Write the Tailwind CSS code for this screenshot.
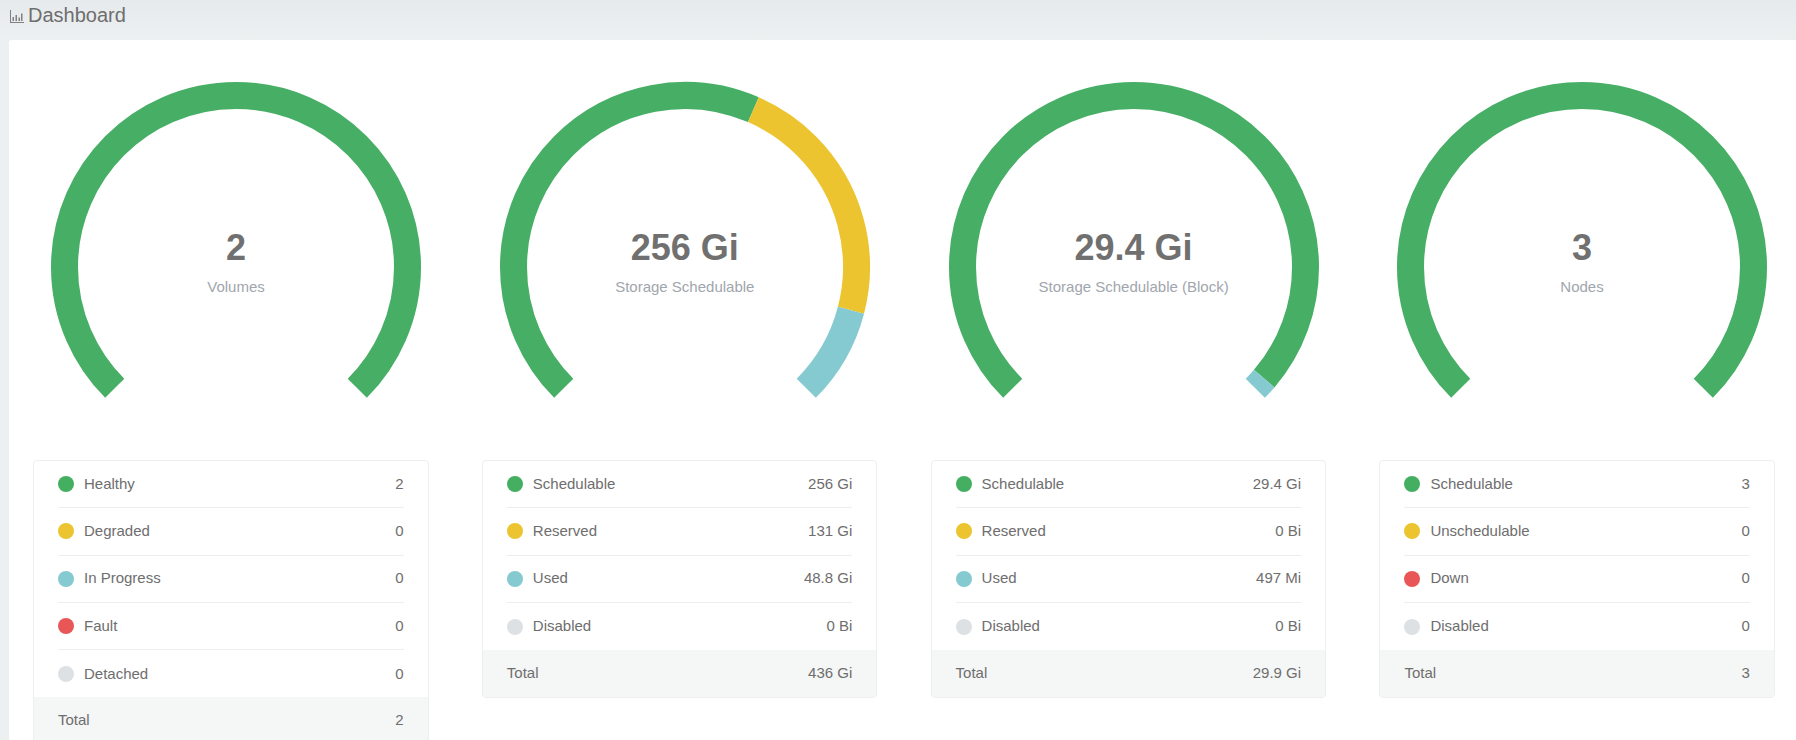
<!DOCTYPE html>
<html lang="en">
<head>
    <meta charset="UTF-8">
    <title>Dashboard</title>
    <script src="https://cdn.jsdelivr.net/npm/@tailwindcss/browser@4"></script>
</head>
<body class="h-[740px] overflow-hidden bg-[#ecf0f1] font-['Liberation_Sans',Arial,sans-serif] text-[15px] text-[#6e6e6e]">
    <!-- header -->
    <div class="h-10 pl-[10px] flex items-start bg-gradient-to-b from-[#e7eaec] to-[#ecf0f1]">
        <svg class="mt-[10px] w-[14px] h-[13px] text-[#808080]" viewBox="0 0 14 13" fill="currentColor">
            <path d="M0 0h1v12h13v1H0z"/>
            <path d="M2.500 7h1.500v4H2.500zM5.500 5h1.500v6H5.500zM8.500 7.500h1.500v3.500H8.500zM11 3.500h1.500v7.500H11z"/>
        </svg>
        <h1 class="ml-[4px] mt-[3px] text-[20px] leading-6 text-[#6e6e6e]">Dashboard</h1>
    </div>

    <!-- panel -->
    <div class="ml-[9px] h-[700px] bg-white rounded-tl-[3px] pt-[41px] pl-[24px] grid grid-cols-[395.500px_395.500px_395.500px_395.500px] gap-x-[53.300px] items-start">

        <!-- volumes -->
        <div>
            <div class="relative ml-[17px] w-[372px] h-[372px] mb-[7px]">
                <svg class="w-[372px] h-[372px]" viewBox="0 0 372 372" fill="none" stroke-width="27">
                    <circle cx="186" cy="186" r="171.500" pathLength="360" transform="rotate(135 186 186)" stroke="#46ae65" stroke-dasharray="270 360"/>
                </svg>
                <div class="absolute left-0 right-0 top-[144px] text-center">
                    <div class="text-[36px] leading-[46px] font-bold text-[#707070]">2</div>
                    <div class="mt-[5.500px] leading-5 text-[#9fa6ad]">Volumes</div>
                </div>
            </div>
            <div class="bg-white border border-[#eceeef] rounded-[4px] overflow-hidden">
                <div class="mx-[24px] h-[47.300px] flex items-center border-b border-[#eceeef]"><span class="w-4 h-4 rounded-full bg-[#44ae61] mr-[10px]"></span><span>Healthy</span><span class="ml-auto">2</span></div>
                <div class="mx-[24px] h-[47.300px] flex items-center border-b border-[#eceeef]"><span class="w-4 h-4 rounded-full bg-[#ecc42f] mr-[10px]"></span><span>Degraded</span><span class="ml-auto">0</span></div>
                <div class="mx-[24px] h-[47.300px] flex items-center border-b border-[#eceeef]"><span class="w-4 h-4 rounded-full bg-[#85cad1] mr-[10px]"></span><span>In Progress</span><span class="ml-auto">0</span></div>
                <div class="mx-[24px] h-[47.300px] flex items-center border-b border-[#eceeef]"><span class="w-4 h-4 rounded-full bg-[#e85658] mr-[10px]"></span><span>Fault</span><span class="ml-auto">0</span></div>
                <div class="mx-[24px] h-[47.300px] flex items-center"><span class="w-4 h-4 rounded-full bg-[#dee1e4] mr-[10px]"></span><span>Detached</span><span class="ml-auto">0</span></div>
                <div class="px-[24px] h-[46.400px] flex items-center bg-[#f5f6f6]"><span>Total</span><span class="ml-auto">2</span></div>
            </div>
        </div>

        <!-- storage schedulable -->
        <div>
            <div class="relative ml-[17px] w-[372px] h-[372px] mb-[7px]">
                <svg class="w-[372px] h-[372px]" viewBox="0 0 372 372" fill="none" stroke-width="27">
                    <g transform="rotate(135 186 186)">
                        <circle cx="186" cy="186" r="171.500" pathLength="360" stroke="#46ae65" stroke-dasharray="158.500 360"/>
                        <circle cx="186" cy="186" r="171.500" pathLength="360" stroke="#ecc42f" stroke-dasharray="81.100 360" stroke-dashoffset="-158.500"/>
                        <circle cx="186" cy="186" r="171.500" pathLength="360" stroke="#85cad1" stroke-dasharray="30.400 360" stroke-dashoffset="-239.600"/>
                    </g>
                </svg>
                <div class="absolute left-0 right-0 top-[144px] text-center">
                    <div class="text-[36px] leading-[46px] font-bold text-[#707070]">256 Gi</div>
                    <div class="mt-[5.500px] leading-5 text-[#9fa6ad]">Storage Schedulable</div>
                </div>
            </div>
            <div class="bg-white border border-[#eceeef] rounded-[4px] overflow-hidden">
                <div class="mx-[24px] h-[47.300px] flex items-center border-b border-[#eceeef]"><span class="w-4 h-4 rounded-full bg-[#44ae61] mr-[10px]"></span><span>Schedulable</span><span class="ml-auto">256 Gi</span></div>
                <div class="mx-[24px] h-[47.300px] flex items-center border-b border-[#eceeef]"><span class="w-4 h-4 rounded-full bg-[#ecc42f] mr-[10px]"></span><span>Reserved</span><span class="ml-auto">131 Gi</span></div>
                <div class="mx-[24px] h-[47.300px] flex items-center border-b border-[#eceeef]"><span class="w-4 h-4 rounded-full bg-[#85cad1] mr-[10px]"></span><span>Used</span><span class="ml-auto">48.8 Gi</span></div>
                <div class="mx-[24px] h-[47.300px] flex items-center"><span class="w-4 h-4 rounded-full bg-[#dee1e4] mr-[10px]"></span><span>Disabled</span><span class="ml-auto">0 Bi</span></div>
                <div class="px-[24px] h-[46.400px] flex items-center bg-[#f5f6f6]"><span>Total</span><span class="ml-auto">436 Gi</span></div>
            </div>
        </div>

        <!-- storage schedulable (block) -->
        <div>
            <div class="relative ml-[17px] w-[372px] h-[372px] mb-[7px]">
                <svg class="w-[372px] h-[372px]" viewBox="0 0 372 372" fill="none" stroke-width="27">
                    <g transform="rotate(135 186 186)">
                        <circle cx="186" cy="186" r="171.500" pathLength="360" stroke="#46ae65" stroke-dasharray="265.600 360"/>
                        <circle cx="186" cy="186" r="171.500" pathLength="360" stroke="#85cad1" stroke-dasharray="4.400 360" stroke-dashoffset="-265.600"/>
                    </g>
                </svg>
                <div class="absolute left-0 right-0 top-[144px] text-center">
                    <div class="text-[36px] leading-[46px] font-bold text-[#707070]">29.4 Gi</div>
                    <div class="mt-[5.500px] leading-5 text-[#9fa6ad]">Storage Schedulable (Block)</div>
                </div>
            </div>
            <div class="bg-white border border-[#eceeef] rounded-[4px] overflow-hidden">
                <div class="mx-[24px] h-[47.300px] flex items-center border-b border-[#eceeef]"><span class="w-4 h-4 rounded-full bg-[#44ae61] mr-[10px]"></span><span>Schedulable</span><span class="ml-auto">29.4 Gi</span></div>
                <div class="mx-[24px] h-[47.300px] flex items-center border-b border-[#eceeef]"><span class="w-4 h-4 rounded-full bg-[#ecc42f] mr-[10px]"></span><span>Reserved</span><span class="ml-auto">0 Bi</span></div>
                <div class="mx-[24px] h-[47.300px] flex items-center border-b border-[#eceeef]"><span class="w-4 h-4 rounded-full bg-[#85cad1] mr-[10px]"></span><span>Used</span><span class="ml-auto">497 Mi</span></div>
                <div class="mx-[24px] h-[47.300px] flex items-center"><span class="w-4 h-4 rounded-full bg-[#dee1e4] mr-[10px]"></span><span>Disabled</span><span class="ml-auto">0 Bi</span></div>
                <div class="px-[24px] h-[46.400px] flex items-center bg-[#f5f6f6]"><span>Total</span><span class="ml-auto">29.9 Gi</span></div>
            </div>
        </div>

        <!-- nodes -->
        <div>
            <div class="relative ml-[16.600px] w-[372px] h-[372px] mb-[7px]">
                <svg class="w-[372px] h-[372px]" viewBox="0 0 372 372" fill="none" stroke-width="27">
                    <circle cx="186" cy="186" r="171.500" pathLength="360" transform="rotate(135 186 186)" stroke="#46ae65" stroke-dasharray="270 360"/>
                </svg>
                <div class="absolute left-0 right-0 top-[144px] text-center">
                    <div class="text-[36px] leading-[46px] font-bold text-[#707070]">3</div>
                    <div class="mt-[5.500px] leading-5 text-[#9fa6ad]">Nodes</div>
                </div>
            </div>
            <div class="bg-white border border-[#eceeef] rounded-[4px] overflow-hidden">
                <div class="mx-[24px] h-[47.300px] flex items-center border-b border-[#eceeef]"><span class="w-4 h-4 rounded-full bg-[#44ae61] mr-[10px]"></span><span>Schedulable</span><span class="ml-auto">3</span></div>
                <div class="mx-[24px] h-[47.300px] flex items-center border-b border-[#eceeef]"><span class="w-4 h-4 rounded-full bg-[#ecc42f] mr-[10px]"></span><span>Unschedulable</span><span class="ml-auto">0</span></div>
                <div class="mx-[24px] h-[47.300px] flex items-center border-b border-[#eceeef]"><span class="w-4 h-4 rounded-full bg-[#e85658] mr-[10px]"></span><span>Down</span><span class="ml-auto">0</span></div>
                <div class="mx-[24px] h-[47.300px] flex items-center"><span class="w-4 h-4 rounded-full bg-[#dee1e4] mr-[10px]"></span><span>Disabled</span><span class="ml-auto">0</span></div>
                <div class="px-[24px] h-[46.400px] flex items-center bg-[#f5f6f6]"><span>Total</span><span class="ml-auto">3</span></div>
            </div>
        </div>
    </div>
</body>
</html>
